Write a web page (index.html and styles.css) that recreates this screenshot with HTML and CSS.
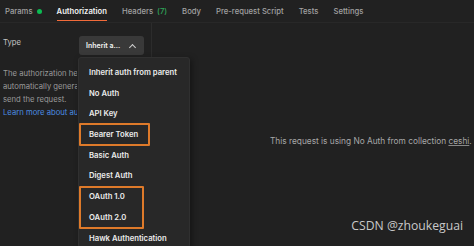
FILE: index.html
```html
<!DOCTYPE html>
<html lang="en">
<head>
  <meta charset="UTF-8" />
  <title>Authorization</title>
  <link rel="stylesheet" href="styles.css">
</head>
<body>
  <div class="tabs">
    <div class="tab">Params <span class="dot"></span></div>
    <div class="tab active">Authorization</div>
    <div class="tab">Headers <span class="count">(7)</span></div>
    <div class="tab">Body</div>
    <div class="tab">Pre-request Script</div>
    <div class="tab">Tests</div>
    <div class="tab">Settings</div>
  </div>
  <div class="content">
    <div class="left">
      <div class="type-row">
        <span class="label">Type</span>
        <button class="select"><span>Inherit a...</span><span class="caret"></span></button>
      </div>
      <div class="desc">
        <div>The authorization header will be</div>
        <div>automatically generated when you</div>
        <div>send the request.</div>
        <a href="#">Learn more about authorization</a>
      </div>
    </div>
    <div class="right">
      <p class="msg">This request is using No Auth from collection <u>ceshi</u>.</p>
    </div>
  </div>

  <ul class="menu">
    <li>Inherit auth from parent</li>
    <li>No Auth</li>
    <li>API Key</li>
    <li>Bearer Token</li>
    <li>Basic Auth</li>
    <li>Digest Auth</li>
    <li>OAuth 1.0</li>
    <li>OAuth 2.0</li>
    <li>Hawk Authentication</li>
  </ul>
  <div class="mark mark-bearer"></div>
  <div class="mark mark-oauth"></div>

  <div class="watermark">CSDN @zhoukeguai</div>
</body>
</html>
```

FILE: styles.css
```css
body {
  margin: 0;
  background: #212121;
  color: #a2a2a2;
  font-family: Inter, 'Open Sans', Arial, sans-serif;
  font-size: 7.7px;
  width: 474px;
  height: 246px;
  overflow: hidden;
}
.tabs {
  display: flex;
  height: 22px;
  padding-left: 5px;
  gap: 15px;
  border-bottom: 1px solid #282828;
}
.tab {
  display: flex;
  align-items: center;
  gap: 4px;
  white-space: nowrap;
  font-weight: 500;
  position: relative;
}
.tab.active {
  color: #f2f2f2;
  font-weight: 600;
}
.tab.active::after {
  content: '';
  position: absolute;
  left: 0;
  right: 0;
  bottom: 1px;
  height: 1px;
  background: #f26b3a;
}
.dot {
  width: 5px;
  height: 5px;
  border-radius: 50%;
  background: #0cbb52;
}
.count {
  color: #2fa85a;
}
.content {
  display: flex;
  height: 223px;
}
.left {
  width: 148px;
  padding: 12px 0 0 3px;
  border-right: 1px solid #2c2c2c;
  overflow: hidden;
}
.type-row {
  display: flex;
  align-items: center;
  gap: 58px;
  height: 19px;
  margin-top: 1px;
}
.label {
  color: #c4c4c4;
  margin-top: -7px;
}
.select {
  width: 65px;
  height: 19px;
  background: #393939;
  border: none;
  border-radius: 3px;
  color: #f2f2f2;
  font: inherit;
  font-weight: 600;
  font-size: 7px;
  white-space: nowrap;
  padding: 0 9px 0 7px;
  display: flex;
  align-items: center;
  justify-content: space-between;
}
.caret {
  flex: none;
  width: 4px;
  height: 4px;
  border-left: 1px solid #d0d0d0;
  border-top: 1px solid #d0d0d0;
  transform: rotate(45deg);
  margin-top: 3px;
}
.desc {
  margin-top: 12px;
  line-height: 13px;
  width: 74px;
  overflow: hidden;
  white-space: nowrap;
  color: #9a9a9a;
}
.desc a {
  display: block;
  color: #4a8be0;
  text-decoration: none;
}
.right {
  flex: 1;
  padding: 113px 0 0 118px;
}
.msg {
  margin: 0;
  white-space: nowrap;
  font-size: 8.3px;
  color: #a8a8a8;
}
.msg u {
  text-decoration-color: #888;
}
.menu {
  position: absolute;
  left: 78px;
  top: 57px;
  width: 110px;
  height: 184px;
  margin: 0;
  padding: 5px 0 0;
  list-style: none;
  overflow: hidden;
  background: #282828;
  border: 1px solid #303030;
  border-radius: 3px;
  box-shadow: 2px 2px 6px rgba(0,0,0,0.4);
}
.menu li {
  height: 20.7px;
  line-height: 20.7px;
  padding-left: 10px;
  color: #ececec;
  font-weight: 600;
  white-space: nowrap;
}
.mark {
  position: absolute;
  border: 2px solid #de7a2a;
  border-radius: 1px;
}
.mark-bearer {
  left: 79px;
  top: 123px;
  width: 67px;
  height: 19px;
}
.mark-oauth {
  left: 79px;
  top: 186px;
  width: 61px;
  height: 39px;
}
.watermark {
  position: absolute;
  right: 11px;
  bottom: 12px;
  color: #c9c9c9;
  font-family: 'Open Sans', Arial, sans-serif;
  font-size: 12.2px;
}
```
